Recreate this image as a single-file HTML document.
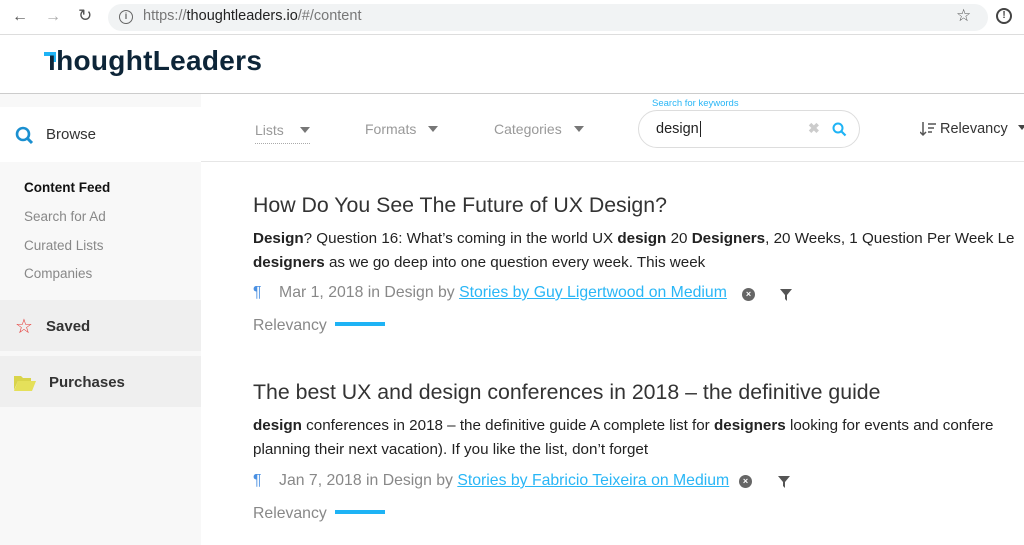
<!DOCTYPE html>
<html><head><meta charset="utf-8"><style>
*{margin:0;padding:0;box-sizing:border-box}
body{width:1024px;height:545px;overflow:hidden;background:#fff;font-family:"Liberation Sans",sans-serif;position:relative}
.a{position:absolute}
.chrome{top:0;left:0;width:1024px;height:35px;background:#fff;border-bottom:1px solid #ddd}
.url{left:108px;top:4px;width:880px;height:27px;background:#f1f3f4;border-radius:14px}
.side{left:0;top:94px;width:201px;height:451px;background:#f8f8f8}
.nav{font-size:13.5px;color:#888;left:24px}
.tb{color:#999;font-size:14px}
.caret{display:inline-block;width:0;height:0;border-left:5px solid transparent;border-right:5px solid transparent;border-top:6px solid #777;margin-left:12px;vertical-align:2px}
h2{font-weight:normal;font-size:21.3px;color:#333;position:absolute;left:253px}
.p{font-size:15.2px;color:#222;left:253px;line-height:24px;white-space:nowrap}
.meta{font-size:15.8px;color:#888;left:253px;white-space:nowrap}
.meta a{color:#29b6f6;text-decoration:underline}
.rel{font-size:15.8px;color:#888;left:253px}
.bar{display:inline-block;width:50px;height:4px;background:#1eb3f5;vertical-align:4px;margin-left:8px}
</style></head><body>
<div class="a chrome"></div>
<div class="a" style="left:12px;top:8px;font-size:16px;color:#555">&#8592;</div>
<div class="a" style="left:45px;top:8px;font-size:16px;color:#aaa">&#8594;</div>
<div class="a" style="left:78px;top:6px;font-size:17px;color:#555">&#8635;</div>
<div class="a url"></div>
<div class="a" style="left:119px;top:10px;width:14px;height:14px;border:1.5px solid #666;border-radius:50%;font-size:9px;text-align:center;line-height:11px;color:#666;font-weight:bold">i</div>
<div class="a" style="left:143px;top:8px;font-size:14.5px;color:#777">https://<span style="color:#222">thoughtleaders.io</span>/#/content</div>
<div class="a" style="left:956px;top:6px;font-size:17px;color:#555">&#9734;</div>
<div class="a" style="left:996px;top:8px;width:16px;height:16px;border:2px solid #444;border-radius:50%;font-size:10px;text-align:center;line-height:12px;font-weight:bold;color:#444">!</div>
<div class="a" style="left:44px;top:52px;width:12px;height:4px;background:#1eb3f5"></div>
<div class="a" style="left:52px;top:52px;width:4px;height:10px;background:#1eb3f5"></div>
<div class="a" style="left:48px;top:45px;font-size:28px;font-weight:bold;color:#0d2538;letter-spacing:0.3px">&#305;houghtLeaders</div>
<div class="a" style="left:0;top:93px;width:1024px;height:1px;background:#ccc"></div>
<div class="a side"></div>
<div class="a" style="left:0;top:107px;width:201px;height:55px;background:#fff"></div>
<div class="a" style="left:201px;top:94px;width:823px;height:68px;background:#fff;border-bottom:1px solid #e6e6e6"></div>
<svg class="a" style="left:15px;top:126px" width="20" height="20"><circle cx="8" cy="8" r="6" fill="none" stroke="#1a8fd0" stroke-width="2.6"/><path d="M12 12l5 5" stroke="#1a8fd0" stroke-width="3"/></svg>
<div class="a" style="left:46px;top:126px;font-size:15px;color:#333">Browse</div>
<div class="a nav" style="top:180px;color:#111;font-weight:bold">Content Feed</div>
<div class="a nav" style="top:209px">Search for Ad</div>
<div class="a nav" style="top:238px">Curated Lists</div>
<div class="a nav" style="top:266px">Companies</div>
<div class="a" style="left:0;top:300px;width:201px;height:51px;background:#efefef"></div>
<div class="a" style="left:0;top:356px;width:201px;height:51px;background:#efefef"></div>
<div class="a" style="left:15px;top:314px;font-size:20px;color:#e53935">&#9734;</div>
<div class="a" style="left:46px;top:318px;font-size:15px;color:#333;font-weight:bold">Saved</div>
<svg class="a" style="left:14px;top:375px" width="22" height="16"><path d="M0 1h7l2 2h8v3H4L0 15z" fill="#d9d44a"/><path d="M4 6h18l-4 10H0z" fill="#e5e05a"/></svg>
<div class="a" style="left:49px;top:374px;font-size:15px;color:#333;font-weight:bold">Purchases</div>
<div class="a tb" style="left:255px;top:122px;border-bottom:1px dotted #aaa;padding-bottom:5px">Lists<span class="caret" style="margin-left:16px"></span></div>
<div class="a tb" style="left:365px;top:121px">Formats<span class="caret"></span></div>
<div class="a tb" style="left:494px;top:121px">Categories<span class="caret"></span></div>
<div class="a" style="left:652px;top:98px;font-size:9.5px;color:#29b6f6">Search for keywords</div>
<div class="a" style="left:638px;top:110px;width:222px;height:38px;border:1px solid #ddd;border-radius:19px"></div>
<div class="a" style="left:656px;top:121px;font-size:14.5px;color:#222">design<span style="border-left:1px solid #222;margin-left:1px"></span></div>
<div class="a" style="left:808px;top:120px;font-size:14px;color:#ccc;font-weight:bold">&#10006;</div>
<svg class="a" style="left:832px;top:122px" width="15" height="15"><circle cx="6" cy="6" r="4.5" fill="none" stroke="#1eb3f5" stroke-width="2"/><path d="M9.5 9.5l4 4" stroke="#1eb3f5" stroke-width="2.2"/></svg>
<svg class="a" style="left:920px;top:121px" width="16" height="16"><path d="M3 1v13M0 11l3 3 3-3" stroke="#555" stroke-width="1.5" fill="none"/><path d="M8 3h8M8 7h6M8 11h4" stroke="#555" stroke-width="1.5"/></svg>
<div class="a" style="left:940px;top:121px;font-size:14.5px;color:#333">Relevancy</div>
<div class="a" style="left:1018px;top:125px;width:0;height:0;border-left:4px solid transparent;border-right:4px solid transparent;border-top:5px solid #444"></div>

<h2 style="top:193px">How Do You See The Future of UX Design?</h2>
<div class="a p" style="top:227px"><b>Design</b>? Question 16: What’s coming in the world UX <b>design</b> 20 <b>Designers</b>, 20 Weeks, 1 Question Per Week Le<br><b>designers</b> as we go deep into one question every week. This week</div>
<div class="a meta" style="top:284px"><span style="color:#4a90e2">&#182;</span>&nbsp;&nbsp;&nbsp; Mar 1, 2018 in Design by <a>Stories by Guy Ligertwood on Medium</a></div>
<div class="a" style="left:742px;top:288px;width:13px;height:13px;border-radius:50%;background:#666;color:#fff;font-size:9px;text-align:center;line-height:13px;font-weight:bold">×</div>
<svg class="a" style="left:780px;top:289px" width="12" height="12"><path d="M0 0h12L7 6v6L5 10V6z" fill="#555"/></svg>
<div class="a rel" style="top:317px">Relevancy<span class="bar"></span></div>

<h2 style="top:380px">The best UX and design conferences in 2018 – the definitive guide</h2>
<div class="a p" style="top:414px"><b>design</b> conferences in 2018 – the definitive guide A complete list for <b>designers</b> looking for events and confere<br>planning their next vacation). If you like the list, don’t forget</div>
<div class="a meta" style="top:472px"><span style="color:#4a90e2">&#182;</span>&nbsp;&nbsp;&nbsp; Jan 7, 2018 in Design by <a>Stories by Fabricio Teixeira on Medium</a></div>
<div class="a" style="left:739px;top:475px;width:13px;height:13px;border-radius:50%;background:#666;color:#fff;font-size:9px;text-align:center;line-height:13px;font-weight:bold">×</div>
<svg class="a" style="left:778px;top:476px" width="12" height="12"><path d="M0 0h12L7 6v6L5 10V6z" fill="#555"/></svg>
<div class="a rel" style="top:505px">Relevancy<span class="bar"></span></div>
</body></html>
